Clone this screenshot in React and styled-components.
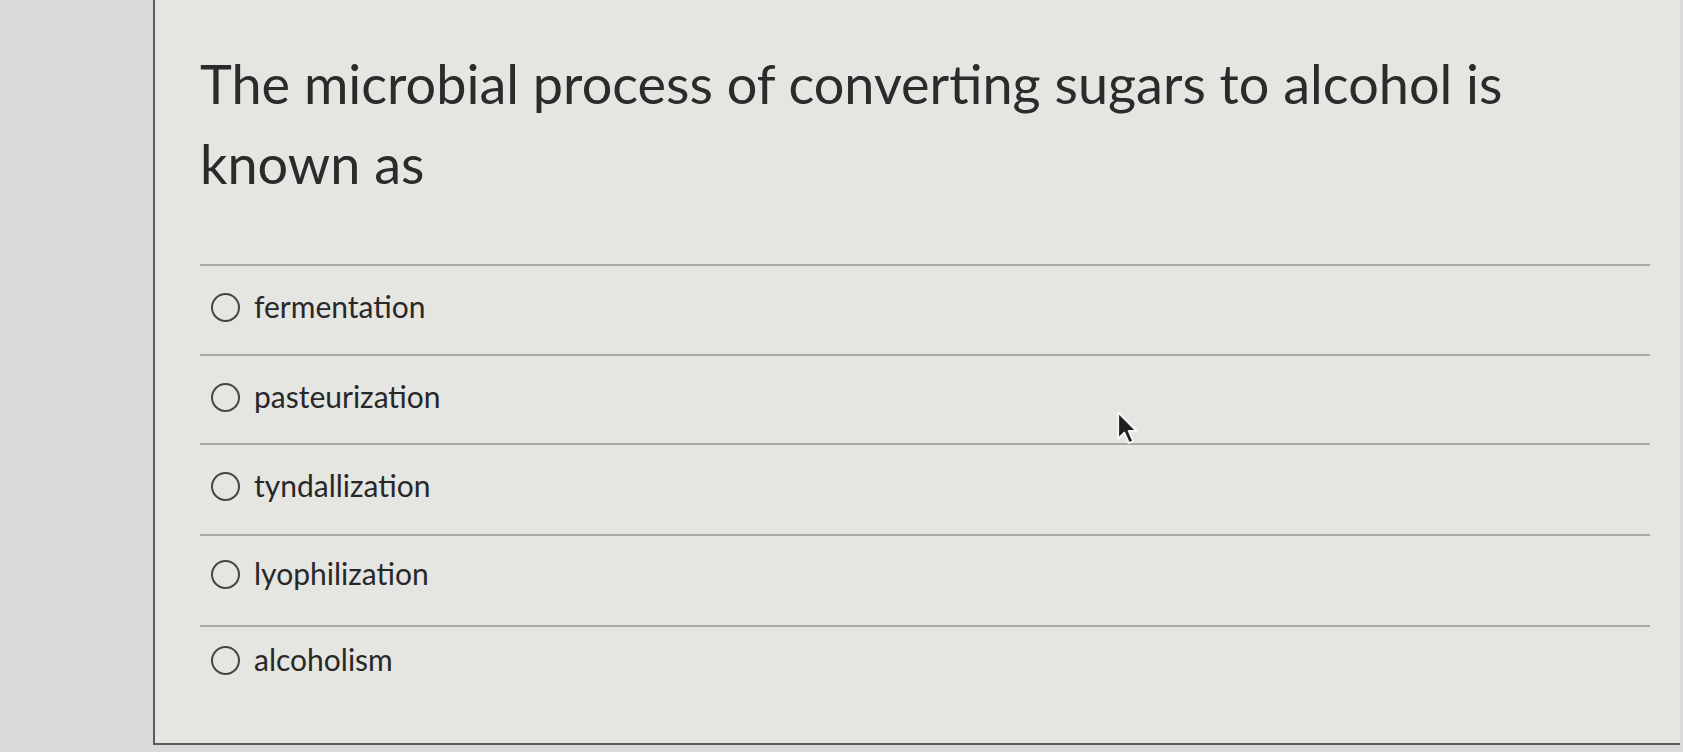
import React from 'react';
import styled, { createGlobalStyle } from 'styled-components';

const GlobalStyle = createGlobalStyle`
  html, body {
    margin: 0;
    padding: 0;
    background: #d9d9d7;
    font-family: Lato, 'Open Sans', sans-serif;
    overflow: hidden;
  }
`;

// row heights and text centre (from the row's top line) follow the photo
const OPTIONS = [
  { text: 'fermentation', h: 90, mid: 41 },
  { text: 'pasteurization', h: 89, mid: 41 },
  { text: 'tyndallization', h: 91, mid: 41 },
  { text: 'lyophilization', h: 91, mid: 38 },
  { text: 'alcoholism', h: 90, mid: 33 },
];

const App = () => {
  return (
    <>
      <GlobalStyle />
      <Page>
        <Gutter />
        <Panel>
          <Question>
            The microbial process of converting sugars to alcohol is
            <br />
            known as
          </Question>
          <Answers>
            {OPTIONS.map(opt => (
              <Answer key={opt.text} $h={opt.h} $mid={opt.mid}>
                <Radio />
                <Label>{opt.text}</Label>
              </Answer>
            ))}
          </Answers>
          <Cursor viewBox='0 0 16 26'>
            <path d='M1.5 1.5 L1.5 21 L6 16.4 L9.4 24 L12.6 22.5 L9.3 15.2 L15 15.2 Z' fill='#1e1e1e' stroke='#f4f4f4' strokeWidth='1.5' strokeLinejoin='round' />
          </Cursor>
        </Panel>
      </Page>
    </>
  );
};

const Page = styled.div`
  display: flex;
  height: 752px;
  width: 1683px;
`;

const Gutter = styled.div`
  width: 153px;
  flex-shrink: 0;
  background: #d9d9d7;
`;

const Panel = styled.main`
  position: relative;
  width: 1527px;
  height: 745px;
  box-sizing: border-box;
  background: #e5e5e2;
  border-left: 2px solid #5a5a5a;
  border-bottom: 2px solid #5a5a5a;
  padding: 44px 30px 0 45px;
`;

const Question = styled.h1`
  margin: 0;
  font-size: 54px;
  line-height: 80px;
  font-weight: 400;
  color: #2b2b2b;
  white-space: nowrap;
`;

const Answers = styled.ul`
  list-style: none;
  margin: 60px 0 0;
  padding: 0;
`;

const Answer = styled.li`
  display: flex;
  align-items: center;
  height: ${p => p.$h}px;
  border-top: 2px solid #a9a9a7;
  padding: 0 0 ${p => Math.max(0, p.$h - 2 * p.$mid)}px 11px;
  gap: 14px;
  box-sizing: border-box;
`;

const Radio = styled.span`
  width: 25px;
  height: 25px;
  border-radius: 50%;
  border: 2px solid #464646;
  flex-shrink: 0;
  margin-top: 2px;
`;

const Label = styled.span`
  font-size: 30px;
  color: #282828;
`;

const Cursor = styled.svg`
  position: absolute;
  left: 961px;
  top: 410px;
  width: 22px;
  height: 36px;
`;

export default App;
